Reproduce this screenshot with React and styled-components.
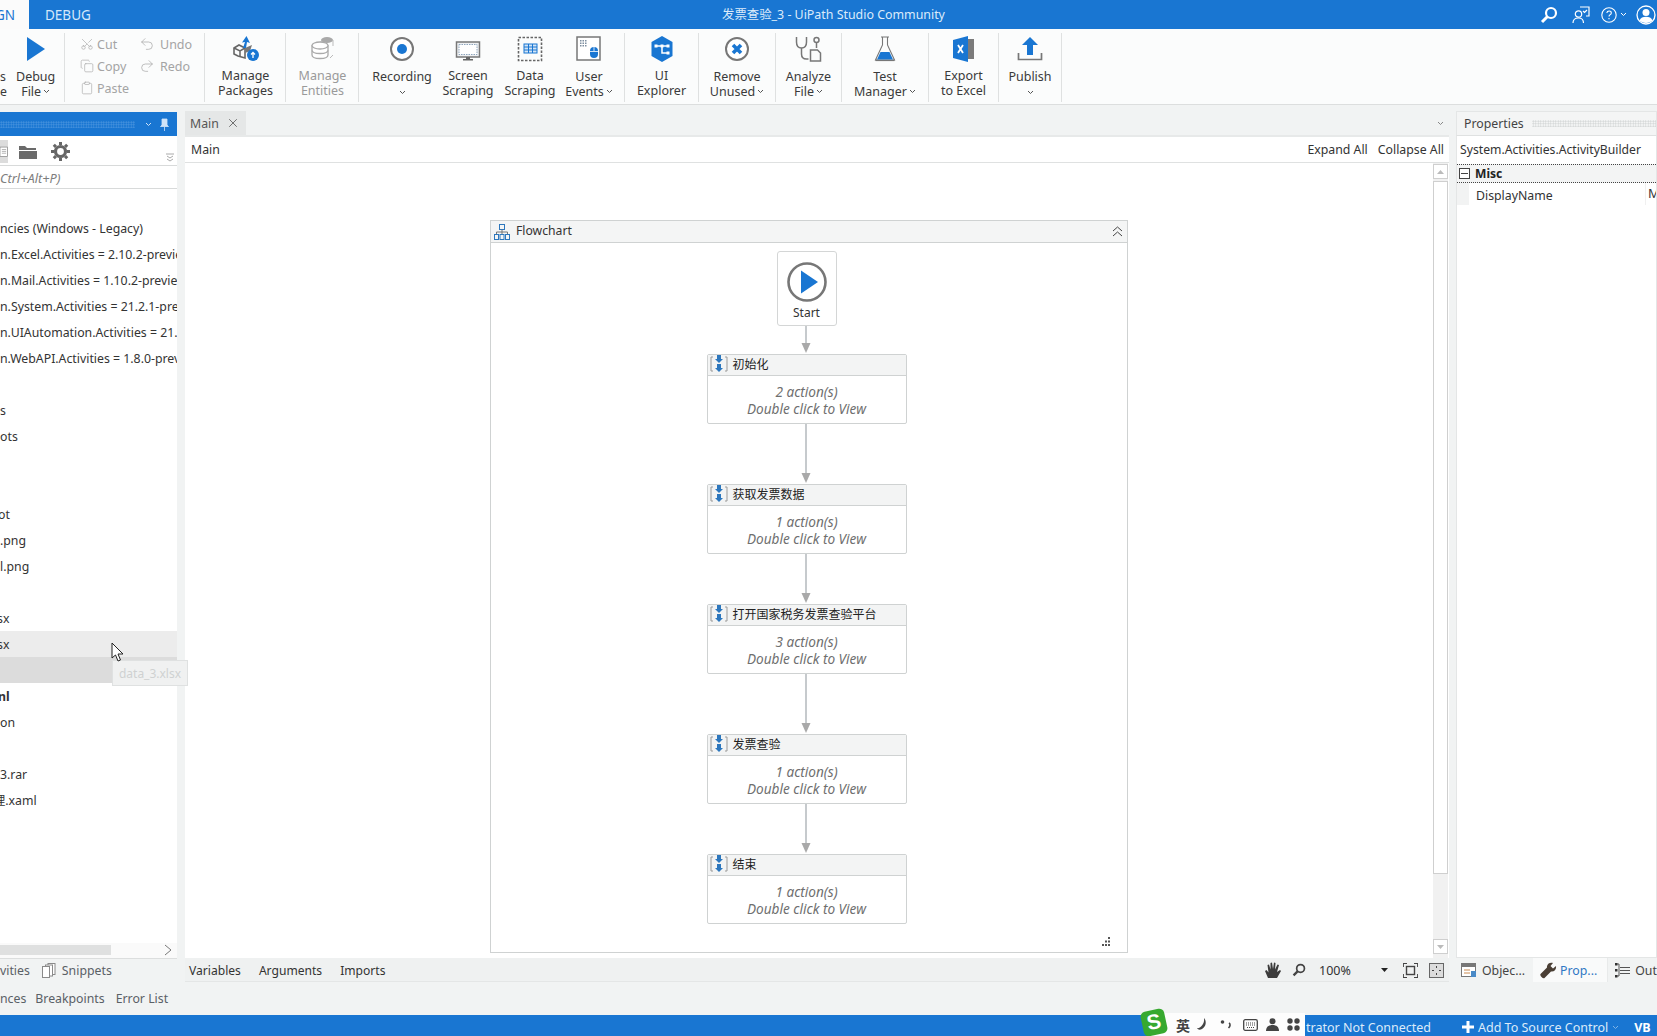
import React from 'react';
import styled, { createGlobalStyle } from 'styled-components';
import { Scissors, Copy, Clipboard, Undo2, Redo2, X } from 'lucide-react';

const BLUE = '#1976d2';
const FONT = '"Noto Sans", "Noto Sans CJK SC", sans-serif';

const Global = createGlobalStyle`
  html, body { margin: 0; padding: 0; background: #f1f3f3; }
  * { box-sizing: border-box; }
`;

const Root = styled.div`
  position: relative; width: 1657px; height: 1036px; display: flex; flex-direction: column;
  overflow: hidden; background: #f1f3f3; font-family: ${FONT}; font-size: 12.3px; color: #333;
`;

/* title bar */
const TitleBar = styled.header`
  height: 29px; flex: none; background: ${BLUE}; display: grid; grid-template-columns: 1fr auto 1fr;
  align-items: center; padding-left: 10px; color: #fff;
`;
const TabsLeft = styled.div`display: flex; height: 29px; margin-left: -10px; align-items: stretch;`;
const ModeTab = styled.div`
  display: flex; align-items: center; overflow: hidden; white-space: nowrap; font-size: 13.5px; flex: none;
  width: ${p => p.$w}px; justify-content: ${p => (p.$active ? 'flex-end' : 'flex-start')};
  background: ${p => (p.$active ? '#fbfbfb' : 'transparent')};
  color: ${p => (p.$active ? BLUE : '#d6e8fa')};
  padding: ${p => (p.$active ? '0 14px 0 0' : '0 0 0 16px')};
`;
const Title = styled.div`font-size: 12.4px; color: #dcebfa; margin-top: -1px;`;
const TitleIcons = styled.div`display: flex; justify-content: flex-end; align-items: center; padding-right: 1px; color: #fff;`;
const TitleIcon = styled.span`display: inline-flex; margin-left: ${p => p.$ml || 0}px;`;

/* ribbon */
const Ribbon = styled.div`
  height: 76px; flex: none; background: #fbfcfc; border-bottom: 1px solid #dcdede; display: flex; padding-top: 4px;
`;
const Group = styled.div`
  width: ${p => p.$w}px; height: 69px; flex: none; display: flex; border-right: 1px solid #dfe1e1;
  padding-left: ${p => p.$pl || 0}px;
`;
const RibbonBtn = styled.div`
  flex: ${p => (p.$w ? `0 0 ${p.$w}px` : '1')}; display: flex; flex-direction: column; align-items: center;
  padding-top: 3px; line-height: 15px; font-size: 12.5px;
  color: ${p => (p.$muted ? '#9a9a9a' : '#3a3a3a')}; white-space: nowrap;
`;
const BtnIcon = styled.div`height: ${p => (p.$tight ? 32 : 33)}px; flex: none; display: flex; justify-content: center; align-items: flex-start;`;
const BtnLine = styled.div`display: flex; align-items: center; gap: 2px;`;
const ChevLine = styled.div`display: flex; margin-top: 6px;`;
const EdgeLabels = styled.div`
  width: 16px; flex: none; padding-top: 36px; line-height: 15px; color: #3a3a3a;
`;
const ClipCol = styled.div`display: flex; flex-direction: column; gap: 4px; padding-top: 2px; margin-left: ${p => p.$ml}px; width: ${p => p.$w}px;`;
const ClipItem = styled.div`display: flex; align-items: center; gap: ${p => p.$gap || 3}px; height: 18px; color: #a4a4a4; font-size: 12.5px;`;
const CutGlyph = styled(Scissors)`transform: rotate(-90deg);`;

/* workspace */
const Workspace = styled.div`flex: 1; display: flex; padding-top: 6px; min-height: 0;`;

const LeftCol = styled.aside`width: 177px; margin-right: 8px; flex: none; display: flex; flex-direction: column; padding-top: 1px;`;
const PanelHead = styled.div`
  height: 24px; flex: none; background: ${BLUE}; display: flex; align-items: center; justify-content: flex-end; gap: 8px; padding-right: 8px;
`;
const HeadDots = styled.div`
  flex: 1; height: 7px; margin-right: 2px;
  background-image: radial-gradient(#4a94de .8px, transparent .9px); background-size: 2.5px 2.5px;
`;
const LeftTools = styled.div`
  height: 30px; flex: none; background: #fff; border-bottom: 1px solid #d8dada; display: flex; align-items: center; position: relative; padding-top: 2px;
`;
const ActiveTool = styled.div`width: 8px; height: 23px; background: #dcdcdc; overflow: hidden; display: flex; justify-content: flex-end; align-items: center; margin-right: 11px;`;
const ToolIcon = styled.span`display: inline-flex; margin-right: ${p => p.$mr || 0}px;`;
const MoreBtn = styled.span`position: absolute; right: 3px; bottom: 3px; display: inline-flex;`;
const SearchRow = styled.div`
  height: 23px; flex: none; background: #fff; border-bottom: 1px solid #d8dada; display: flex; align-items: center; padding-top: 2px;
  font-style: italic; color: #7d7d7d; font-size: 12.8px; white-space: nowrap; overflow: hidden;
`;
const Tree = styled.div`flex: 1; background: #fff; display: flex; flex-direction: column; position: relative; min-height: 0; border-bottom: 1px solid #dcdede;`;
const TreeList = styled.div`flex: 1; padding-top: 26px; overflow: hidden;`;
const TreeRow = styled.div`
  height: 26px; display: flex; align-items: center; white-space: nowrap; overflow: hidden; color: #333; font-size: 12.3px;
  font-weight: ${p => (p.$bold ? 700 : 400)};
  background: ${p => (p.$state === 'hover' ? '#ececec' : p.$state === 'sel' ? '#dcdcdc' : 'transparent')};
`;
const TreeText = styled.span`margin-left: ${p => p.$shift || 0}px; flex: none;`;
const HScroll = styled.div`height: 15px; flex: none; display: flex; align-items: center; background: #fafafa; padding-bottom: 2px;`;
const HThumb = styled.div`width: 111px; height: 10px; background: #dfe0e0;`;
const HArrow = styled.span`margin-left: auto; margin-right: 5px; display: inline-flex;`;
const Tooltip = styled.div`
  position: absolute; left: 112px; top: 471px; width: 76px; height: 26px; border: 1px solid #dfe1e1; background: #f0f1f1;
  color: #cfd1d1; font-size: 12px; display: flex; align-items: center; justify-content: center; z-index: 2;
`;
const Cursor = styled.svg`position: absolute; left: 111px; top: 453px; z-index: 3;`;
const SideTabs = styled.div`
  height: ${p => p.$h}px; flex: none; display: flex; align-items: center; color: #5a6066; white-space: nowrap; font-size: 12.3px;
  padding-bottom: ${p => p.$pb || 0}px;
`;
const SideTab = styled.span`display: inline-flex; align-items: center; gap: 6px; margin-left: ${p => p.$ml || 0}px;`;

/* center */
const Center = styled.main`width: 1264px; flex: none; margin-right: 7px; display: flex; flex-direction: column; padding-bottom: 33px;`;
const TabStrip = styled.div`height: 24px; flex: none; display: flex; align-items: center; justify-content: space-between; padding-right: 5px;`;
const DocTab = styled.div`
  width: 61px; height: 24px; background: #e5e7e7; display: flex; align-items: center; padding-left: 5px; gap: 7px; color: #555;
`;
const Crumb = styled.div`
  height: 28px; flex: none; background: #fff; border-top: 2px solid #e7e9e9; border-bottom: 1px solid #dfe1e1;
  display: flex; align-items: center; padding: 0 5px 0 6px; gap: 10px; color: #333;
`;
const Spacer = styled.div`flex: 1;`;
const Canvas = styled.div`flex: 1; background: #fff; display: flex; min-height: 0;`;
const CanvasArea = styled.div`flex: 1; padding: 57px 0 0 305px; min-width: 0;`;
const VScroll = styled.div`width: 15px; margin-right: 1px; flex: none; display: flex; flex-direction: column; padding: 1px 0 4px; background: #f1f1f1;`;
const VBtn = styled.div`height: 15px; flex: none; background: #fff; border: 1px solid #cfcfcf; display: flex; align-items: center; justify-content: center;`;
const VThumb = styled.div`height: 693px; flex: none; margin-top: 2px; background: #fff; border: 1px solid #cfcfcf;`;
const VTrack = styled.div`flex: 1;`;

const Flowchart = styled.section`width: 638px; height: 733px; border: 1px solid #cfd2d2; position: relative; background: #fff; display: flex; flex-direction: column;`;
const FlowHead = styled.div`height: 22px; flex: none; background: #f4f5f5; border-bottom: 1px solid #cfd2d2; display: flex; align-items: center; padding: 0 4px 0 3px; gap: 6px; color: #333; font-size: 12.2px;`;
const FlowTitle = styled.span`margin-top: -3px;`;
const FlowBody = styled.div`flex: 1; display: flex; flex-direction: column; align-items: center; padding: 8px 5px 0 0;`;
const Grip = styled.svg`position: absolute; right: 16px; bottom: 5px;`;
const StartNode = styled.div`
  width: 60px; height: 75px; border: 1px solid #d4d6d6; border-radius: 3px; background: #fff; display: flex; flex-direction: column;
  align-items: center; padding-top: 10px; font-size: 12px; color: #333; gap: 3px; line-height: 15px;
`;
const Connector = styled.svg`display: block; flex: none; margin-right: 2px;`;
const SeqCard = styled.div`width: 200px; height: 70px; flex: none; border: 1px solid #cfd2d2; border-radius: 2px; background: #fff; display: flex; flex-direction: column;`;
const SeqHead = styled.div`height: 21px; flex: none; background: #f3f4f4; border-bottom: 1px solid #cfd2d2; display: flex; align-items: center; padding: 0 0 3px 2px; gap: 5px; font-size: 12px; color: #222;`;
const SeqBody = styled.div`flex: 1; padding-top: 7px; text-align: center; font-style: italic; color: #6f6f6f; line-height: 17px; font-size: 13.6px;`;

const BottomBar = styled.div`height: 24px; flex: none; background: #eff1f1; border-bottom: 1px solid #e4e6e6; display: flex; align-items: center; padding: 1px 0 0 4px; color: #333; font-size: 12.1px;`;
const BottomTab = styled.span`margin-right: ${p => p.$mr}px;`;
const ZoomCluster = styled.div`margin-left: auto; display: flex; align-items: center; padding-right: 5px;`;
const ZoomValue = styled.span`width: 62px; margin-left: 13px; color: #333; font-size: 12.5px;`;

/* right */
const RightCol = styled.aside`width: 201px; flex: none; display: flex; flex-direction: column; padding-bottom: 33px;`;
const PropHead = styled.div`height: 24px; flex: none; display: flex; align-items: center; padding-left: 7px; gap: 8px; color: #444; border: 1px solid #e4e6e6; border-bottom: 0; background: #f4f5f5;`;
const PropDots = styled.div`
  flex: 1; height: 7px;
  background-image: radial-gradient(#d0d3d3 .8px, transparent .9px); background-size: 2.5px 2.5px;
`;
const PropBody = styled.div`flex: 1; background: #fff; border: 1px solid #e4e6e6; border-top: 1px solid #dfe1e1; overflow: hidden;`;
const PropType = styled.div`height: 27px; display: flex; align-items: center; padding-left: 3px; color: #333; white-space: nowrap; font-size: 12.2px;`;
const MiscRow = styled.div`height: 19px; margin-top: 1px; border-top: 1px dotted #444; border-bottom: 1px dotted #444; background: #f3f4f4; display: flex; align-items: center; padding-left: 2px; gap: 5px; font-weight: 700; color: #222; font-size: 12.1px;`;
const PlusBox = styled.span`width: 11px; height: 11px; border: 1px solid #444; background: #fff; display: flex; align-items: center; justify-content: center;`;
const Minus = styled.span`width: 7px; height: 1px; background: #444;`;
const NameRow = styled.div`height: 22px; display: flex; align-items: center; white-space: nowrap;`;
const NameIndent = styled.span`width: 12px; height: 100%; background: #f2f3f3; flex: none;`;
const NameLabel = styled.span`width: 177px; height: 100%; display: flex; align-items: center; padding: 3px 0 0 7px; color: #333; flex: none; border-right: 1px solid #f0f0f0;`;
const NameValue = styled.span`padding-left: 2px; margin-top: -3px; font-size: 13px;`;
const PropTabs = styled.div`height: 24px; flex: none; display: flex; align-items: center; color: #444; white-space: nowrap; overflow: hidden; padding-left: 5px;`;
const PropTab = styled.div`
  display: flex; align-items: center; gap: ${p => p.$gap || 5}px; height: 24px; padding: 1px ${p => p.$pr || 0}px 0 ${p => p.$pl || 0}px;
  background: ${p => (p.$active ? '#f9fafa' : 'transparent')}; color: ${p => (p.$active ? '#2f78c4' : '#444')};
  border-right: ${p => (p.$active ? '1px solid #e8eaea' : '0')};
`;

/* status */
const Status = styled.footer`
  height: 21px; flex: none; background: ${BLUE}; color: #dcebfa; display: flex; align-items: center; padding: 3px 0 0 1306px; white-space: nowrap; font-size: 12.5px;
`;
const StatusItem = styled.span`display: inline-flex; align-items: center; gap: 4px; margin-left: ${p => p.$ml || 0}px; font-weight: ${p => (p.$bold ? 700 : 400)}; color: ${p => (p.$bold ? '#fff' : '#dcebfa')};`;
const Ime = styled.div`
  position: absolute; left: 1148px; bottom: 0; width: 157px; height: 23px; background: #fdfdfd; display: flex; align-items: center; padding-left: 28px; color: #444; z-index: 4;
`;
const ImeLogo = styled.div`
  position: absolute; left: -6px; top: -3px; width: 24px; height: 25px; background: #37a92f; border-radius: 5px; transform: rotate(-12deg);
  color: #fff; font-weight: 900; font-size: 21px; line-height: 24px; text-align: center; font-family: "Liberation Sans", sans-serif;
`;
const ImeChar = styled.span`font-size: 14px; font-weight: 700; margin-right: 6px;`;
const ImeIcon = styled.span`display: inline-flex; margin-right: ${p => p.$mr}px;`;

/* icons */
const Caret = ({ c = '#555' }) => (
  <svg width="7" height="5" viewBox="0 0 7 5"><path d="M1 1l2.5 2.5L6 1" fill="none" stroke={c} strokeWidth="1" /></svg>
);
const RunIcon = () => <svg width="20" height="26" viewBox="0 0 20 26"><path d="M1 1v24l18-12z" fill={BLUE} /></svg>;
const PackagesIcon = () => (
  <svg width="28" height="26" viewBox="0 0 28 26">
    <path d="M2 12l5-3 6 3v10l-7-2-4-2z" fill="none" stroke="#666" strokeWidth="1.6" />
    <path d="M2 12l6 3 5-3M8 15v6" fill="none" stroke="#666" strokeWidth="1.5" />
    <path d="M13 12l7-3-2 6-5 2z" fill="#777" />
    <path d="M11 12l2-6-3 .5L14.500 0 18 7l-3-1-1 6z" fill={BLUE} />
    <circle cx="21" cy="19" r="6" fill={BLUE} />
    <path d="M21 22v-5M19 18.500l2-2 2 2" stroke="#fff" strokeWidth="1.3" fill="none" />
  </svg>
);
const EntitiesIcon = () => (
  <svg width="26" height="26" viewBox="0 0 26 26">
    <ellipse cx="17" cy="4" rx="6" ry="3" fill="#a9a9a9" />
    <path d="M11 5v4M23 4v6" stroke="#bbb" />
    <g fill="#fff" stroke="#aaa" strokeWidth="1.3">
      <path d="M2 19c0 2 3 3.500 8 3.500s8-1.500 8-3.500v-4H2z" />
      <path d="M2 14c0 2 3 3.500 8 3.500s8-1.500 8-3.500v-4H2z" />
      <ellipse cx="10" cy="9.500" rx="8" ry="3.500" />
    </g>
    <path d="M20 22l3-3" stroke="#bbb" />
  </svg>
);
const RecordIcon = () => (
  <svg width="26" height="26" viewBox="0 0 26 26">
    <circle cx="13" cy="13" r="11" fill="#fff" stroke="#777" strokeWidth="2" />
    <circle cx="13" cy="13" r="5" fill={BLUE} />
  </svg>
);
const ScreenIcon = () => (
  <svg width="26" height="26" viewBox="0 0 26 26">
    <rect x="1.500" y="6" width="23" height="15" fill="#eef0f2" stroke="#777" strokeWidth="1.500" />
    <rect x="4" y="8.500" width="18" height="10" fill="#fff" stroke="#8fa6bd" strokeDasharray="1.500 1" />
    <path d="M11 21h4v2h3v1.500H8V23h3z" fill="#666" />
  </svg>
);
const DataIcon = () => (
  <svg width="26" height="26" viewBox="0 0 26 26">
    <rect x="1.500" y="1.500" width="23" height="23" fill="none" stroke="#666" strokeWidth="1.600" strokeDasharray="2.500 1.500" />
    <rect x="7" y="8" width="13" height="9" fill="#d4e5f6" stroke={BLUE} />
    <path d="M7 11h13M7 14h13M11.500 8v9M15.500 8v9" stroke={BLUE} />
  </svg>
);
const EventsIcon = () => (
  <svg width="26" height="26" viewBox="0 0 26 26">
    <rect x="1" y="1" width="23" height="23" fill="#fff" stroke="#777" strokeWidth="1.500" />
    <g fill="#7d8ea0">
      {[4, 6.500, 9].map(x => [4, 6.500, 9].map(y => <rect key={`${x}-${y}`} x={x} y={y} width="1.500" height="1.500" />))}
    </g>
    <rect x="14" y="11" width="8" height="11" rx="4" fill={BLUE} />
    <path d="M14 15.500h8M18 11v4" stroke="#fff" strokeWidth=".8" />
  </svg>
);
const ExplorerIcon = () => (
  <svg width="24" height="26" viewBox="0 0 24 26">
    <path d="M12 0l10.500 6v14L12 26 1.500 20V6z" fill={BLUE} />
    <path d="M6 10h12M12 10v7h6" stroke="#fff" strokeWidth="1.500" fill="none" />
    <rect x="4.500" y="8.500" width="3" height="3" fill="#fff" /><rect x="16.500" y="8.500" width="3" height="3" fill="#fff" /><rect x="16.500" y="15.500" width="3" height="3" fill="#fff" /><rect x="10.500" y="8.500" width="3" height="3" fill="#fff" />
  </svg>
);
const RemoveIcon = () => (
  <svg width="26" height="26" viewBox="0 0 26 26">
    <circle cx="13" cy="13" r="11" fill="#fff" stroke="#777" strokeWidth="2" />
    <path d="M9 9l8 8M17 9l-8 8" stroke={BLUE} strokeWidth="3.600" />
  </svg>
);
const AnalyzeIcon = () => (
  <svg width="28" height="26" viewBox="0 0 28 26">
    <g fill="none" stroke="#777" strokeWidth="1.500">
      <path d="M1.500 1v5c0 4 2 6 5 6s5-2 5-6V1" />
      <path d="M6.500 12v6c0 3 2 5 5 5h2" />
      <circle cx="21.500" cy="4" r="2.500" />
      <path d="M21.500 6.500V12" />
      <path d="M15.500 14h7l3 3v8h-10z" />
    </g>
  </svg>
);
const FlaskIcon = () => (
  <svg width="22" height="26" viewBox="0 0 22 26">
    <path d="M7 1h8M8.500 1v8L1.500 24h19L13.500 9V1" fill="none" stroke="#777" strokeWidth="1.100" />
    <path d="M6.500 16h9l3.500 7.500H3z" fill={BLUE} />
    <path d="M1.500 24.500h19" stroke="#777" strokeWidth="1.200" />
  </svg>
);
const ExcelIcon = () => (
  <svg width="22" height="26" viewBox="0 0 22 26">
    <rect x="13" y="3" width="8" height="20" fill="#7b7b7b" />
    <path d="M0 4L15 0v26L0 22z" fill={BLUE} />
    <path d="M5 9l5 8M10 9l-5 8" stroke="#fff" strokeWidth="1.800" />
  </svg>
);
const PublishIcon = () => (
  <svg width="26" height="26" viewBox="0 0 26 26">
    <path d="M13 1l8 8h-5v10h-6V9H5z" fill={BLUE} />
    <path d="M1.500 17v6.500h23V17" fill="none" stroke="#777" strokeWidth="1.700" />
  </svg>
);
const MagIcon = ({ c = '#fff', s = 18 }) => (
  <svg width={s} height={s} viewBox="0 0 18 18">
    <circle cx="11" cy="7" r="5" fill="none" stroke={c} strokeWidth="2.200" />
    <path d="M7.500 10.500L2 16" stroke={c} strokeWidth="3" />
  </svg>
);
const FeedbackIcon = () => (
  <svg width="18" height="18" viewBox="0 0 18 18" fill="none" stroke="#fff" strokeWidth="1.200">
    <path d="M8 1h9v9h-3" /><circle cx="6.500" cy="8" r="3.200" /><path d="M1 17c0-4 2.500-5 5.500-5s5 1 5 5" /><path d="M11 5l1.500 1.500L15 4" />
  </svg>
);
const HelpIcon = () => (
  <svg width="16" height="16" viewBox="0 0 16 16" fill="none" stroke="#fff" strokeWidth="1.100">
    <circle cx="8" cy="8" r="7.200" /><path d="M5.800 6c.2-1.300 1.200-2 2.300-2 1.300 0 2.200.8 2.200 1.900 0 1.800-2.300 1.700-2.300 3.600" /><path d="M8 11v1.300" />
  </svg>
);
const UserIcon = () => (
  <svg width="20" height="20" viewBox="0 0 20 20">
    <circle cx="10" cy="10" r="9" fill="none" stroke="#fff" strokeWidth="1.300" />
    <circle cx="10" cy="7.500" r="3.500" fill="#fff" /><path d="M3.500 15.500c1-3 3.500-3.800 6.500-3.800s5.500.8 6.500 3.800c-1.500 1.500-4 2.500-6.500 2.500s-5-1-6.500-2.500z" fill="#fff" />
  </svg>
);
const PinIcon = () => (
  <svg width="9" height="13" viewBox="0 0 9 13"><path d="M2 1h5v6l1.500 1.500h-8L2 7zM4.500 8.500V13" fill="#cfe3f8" stroke="#cfe3f8" strokeWidth=".8" /></svg>
);
const DocIcon = () => (
  <svg width="13" height="18" viewBox="0 0 13 18"><rect x="0" y="1" width="12" height="15" fill="#fff" stroke="#777" /><path d="M3 5h7M3 8h7M3 11h7" stroke="#888" /></svg>
);
const FolderIcon = () => (
  <svg width="18" height="14" viewBox="0 0 18 14"><path d="M0 1h6l2 2h9v2H0z" fill="#6a6a6a" /><path d="M0 6h18v8H0z" fill="#6a6a6a" /></svg>
);
const GearIcon = () => (
  <svg width="19" height="19" viewBox="0 0 19 19">
    <circle cx="9.500" cy="9.500" r="5" fill="none" stroke="#666" strokeWidth="3.200" />
    <g stroke="#666" strokeWidth="3">
      <path d="M9.500 0v3M9.500 16v3M0 9.500h3M16 9.500h3M2.800 2.800l2.100 2.100M14.100 14.100l2.100 2.100M2.800 16.200l2.100-2.100M14.100 4.900l2.100-2.100" />
    </g>
  </svg>
);
const MoreIcon = () => (
  <svg width="8" height="9" viewBox="0 0 8 9" fill="none" stroke="#aaa"><path d="M0 1h8" /><path d="M1 3l3 2 3-2M1 6l3 2 3-2" /></svg>
);
const SnippetIcon = () => (
  <svg width="14" height="15" viewBox="0 0 14 15" fill="#fff" stroke="#8a8a8a">
    <rect x="6" y=".5" width="7" height="11" /><rect x="3.500" y="2" width="7" height="11" /><rect x=".5" y="3.500" width="7" height="11" />
  </svg>
);
const FlowIcon = () => (
  <svg width="16" height="16" viewBox="0 0 16 16" fill="none" stroke="#2d77bd">
    <rect x="5.500" y=".5" width="5" height="5" /><path d="M8 5.500V8M2.500 10V8h11v2M8 8v2" stroke="#777" />
    <rect x=".5" y="10.500" width="4" height="5" /><rect x="6" y="10.500" width="4" height="5" /><rect x="11.500" y="10.500" width="4" height="5" />
  </svg>
);
const CollapseIcon = () => (
  <svg width="11" height="11" viewBox="0 0 11 11" fill="none" stroke="#444"><path d="M1 5l4.500-4L10 5M1 10l4.500-4L10 10" /></svg>
);
const SeqIcon = () => (
  <svg width="18" height="18" viewBox="0 0 18 18">
    <path d="M3 2H1v14h2M15 2h2v14h-2" fill="none" stroke="#9a9a9a" />
    <path d="M7 0h4v4h2l-4 4-4-4h2zM7 9h4v4h2l-4 4-4-4h2z" fill="#2d77bd" />
  </svg>
);
const PlayIcon = () => (
  <svg width="40" height="40" viewBox="0 0 40 40">
    <circle cx="20" cy="20" r="18.500" fill="#fff" stroke="#777" strokeWidth="2.600" />
    <path d="M14 8.500v23L31 20z" fill={BLUE} />
  </svg>
);
const Link = ({ h }) => (
  <Connector width="12" height={h} viewBox={`0 0 12 ${h}`}>
    <path d={`M6 0V${h - 9}`} stroke="#c6cacd" strokeWidth="2" />
    <path d={`M1.500 ${h - 11}h9l-4.500 10z`} fill="#a9a9a9" />
  </Connector>
);
const GripIcon = () => (
  <Grip width="10" height="10" viewBox="0 0 10 10" fill="#555">
    <rect x="7" y="0" width="2" height="2" /><rect x="4" y="3.500" width="2" height="2" /><rect x="7" y="3.500" width="2" height="2" />
    <rect x="1" y="7" width="2" height="2" /><rect x="4" y="7" width="2" height="2" /><rect x="7" y="7" width="2" height="2" />
  </Grip>
);
const HandIcon = () => (
  <svg width="16" height="18" viewBox="0 0 16 18" fill="#3c3c3c">
    <path d="M3 17l-3-7 1.500-1 2 2.500L2.500 4 4 3.500l1.500 5L5.500 2 7 1.500 8 8l1-6.500 1.500.5L10 8.500l2.500-5L14 4l-2 7 3-2 1 1-4 7z" />
  </svg>
);
const FitIcon = () => (
  <svg width="15" height="15" viewBox="0 0 15 15" fill="none" stroke="#444" strokeWidth="1.400">
    <rect x="3.500" y="3.500" width="8" height="8" /><path d="M0 4V0h4M11 0h4v4M15 11v4h-4M4 15H0v-4" strokeWidth="1.800" />
  </svg>
);
const Fit2Icon = () => (
  <svg width="15" height="15" viewBox="0 0 15 15"><rect x=".5" y=".5" width="14" height="14" fill="#dcdcdc" stroke="#666" />
    <path d="M7.500 3v2M7.500 10v2M3 7.500h2M10 7.500h2" stroke="#444" /></svg>
);
const ObjectIcon = () => (
  <svg width="16" height="15" viewBox="0 0 16 15"><rect x=".5" y=".5" width="14" height="13" fill="#fff" stroke="#777" /><rect x="1" y="1" width="13" height="3" fill="#777" />
    <path d="M3 7h6M3 10h6" stroke="#c98a50" /><rect x="10" y="8" width="5" height="6" fill="#4a8ac7" /></svg>
);
const WrenchIcon = () => (
  <svg width="17" height="17" viewBox="0 0 17 17"><path d="M16 4l-3 2.500L10.500 4 13 1c-3-1-6.500 1-6 4.500L.5 12c-1 1.500 2.500 5 4 4l6.500-6.500c3.500.5 5.500-2.500 5-5.500z" fill="#4a3f35" /></svg>
);
const OutlineIcon = () => (
  <svg width="15" height="15" viewBox="0 0 15 15"><g fill="#333"><rect x="0" y="0" width="2.500" height="2.500" /><rect x="0" y="6" width="2.500" height="2.500" /><rect x="0" y="12" width="2.500" height="2.500" /></g>
    <path d="M2 1h2v12h-2M5 4.500h10M5 7.500h10M5 10.500h10" stroke="#555" fill="none" /></svg>
);
const PlusIcon = () => (
  <svg width="12" height="12" viewBox="0 0 12 12"><path d="M4.500 0h3v4.500H12v3H7.500V12h-3V7.500H0v-3h4.500z" fill="#fff" /></svg>
);

const RB = ({ icon, lines, caret, w, muted, chev, tight }) => (
  <RibbonBtn $w={w} $muted={muted}>
    <BtnIcon $tight={tight}>{icon}</BtnIcon>
    {lines.map((l, i) => (
      <BtnLine key={l}>{l}{caret && i === lines.length - 1 && <Caret />}</BtnLine>
    ))}
    {chev && <ChevLine><Caret /></ChevLine>}
  </RibbonBtn>
);

const treeRows = [
  { t: 'ncies (Windows - Legacy)' },
  { t: 'n.Excel.Activities = 2.10.2-preview' },
  { t: 'n.Mail.Activities = 1.10.2-preview' },
  { t: 'n.System.Activities = 21.2.1-preview' },
  { t: 'n.UIAutomation.Activities = 21.2.0' },
  { t: 'n.WebAPI.Activities = 1.8.0-preview' },
  { t: '' }, { t: 's' }, { t: 'ots' }, { t: '' }, { t: '' },
  { t: 'ot', x: -2 }, { t: '.png' }, { t: 'l.png' }, { t: '' }, { t: 'sx', x: -3 },
  { t: 'sx', s: 'hover', x: -3 }, { t: '', s: 'sel' },
  { t: 'nl', b: true, x: -2 }, { t: 'on' }, { t: '' }, { t: '3.rar' }, { t: '理.xaml', x: -7 },
];

const seqs = [
  { title: '初始化', n: 2, gap: 28 },
  { title: '获取发票数据', n: 1, gap: 60 },
  { title: '打开国家税务发票查验平台', n: 3, gap: 50 },
  { title: '发票查验', n: 1, gap: 60 },
  { title: '结束', n: 1, gap: 50 },
];

export default function App() {
  return (
    <Root>
      <Global />
      <TitleBar>
        <TabsLeft>
          <ModeTab $w={29} $active>DESIGN</ModeTab>
          <ModeTab $w={80}>DEBUG</ModeTab>
        </TabsLeft>
        <Title>发票查验_3 - UiPath Studio Community</Title>
        <TitleIcons>
          <TitleIcon><MagIcon /></TitleIcon>
          <TitleIcon $ml={14}><FeedbackIcon /></TitleIcon>
          <TitleIcon $ml={11}><HelpIcon /></TitleIcon>
          <TitleIcon $ml={3}><Caret c="#fff" /></TitleIcon>
          <TitleIcon $ml={9}><UserIcon /></TitleIcon>
        </TitleIcons>
      </TitleBar>

      <Ribbon>
        <Group $w={65}>
          <EdgeLabels><div>s</div><div>e</div></EdgeLabels>
          <RB w={38} icon={<RunIcon />} lines={['Debug', 'File']} caret />
        </Group>
        <Group $w={140}>
          <ClipCol $ml={15} $w={59}>
            <ClipItem><CutGlyph size={14} strokeWidth={1.1} color="#a8a8a8" />Cut</ClipItem>
            <ClipItem><Copy size={14} strokeWidth={1.1} color="#a8a8a8" />Copy</ClipItem>
            <ClipItem><Clipboard size={14} strokeWidth={1.1} color="#a8a8a8" />Paste</ClipItem>
          </ClipCol>
          <ClipCol $ml={0} $w={62}>
            <ClipItem $gap={5}><Undo2 size={16} strokeWidth={1.1} color="#a8a8a8" />Undo</ClipItem>
            <ClipItem $gap={5}><Redo2 size={16} strokeWidth={1.1} color="#a8a8a8" />Redo</ClipItem>
          </ClipCol>
        </Group>
        <Group $w={81} $pl={1}><RB tight icon={<PackagesIcon />} lines={['Manage', 'Packages']} /></Group>
        <Group $w={73} $pl={1}><RB tight muted icon={<EntitiesIcon />} lines={['Manage', 'Entities']} /></Group>
        <Group $w={266} $pl={10}>
          <RB w={66} icon={<RecordIcon />} lines={['Recording']} chev />
          <RB w={66} tight icon={<ScreenIcon />} lines={['Screen', 'Scraping']} />
          <RB w={58} tight icon={<DataIcon />} lines={['Data', 'Scraping']} />
          <RB w={60} icon={<EventsIcon />} lines={['User', 'Events']} caret />
        </Group>
        <Group $w={74}><RB tight icon={<ExplorerIcon />} lines={['UI', 'Explorer']} /></Group>
        <Group $w={77}><RB icon={<RemoveIcon />} lines={['Remove', 'Unused']} caret /></Group>
        <Group $w={66}><RB icon={<AnalyzeIcon />} lines={['Analyze', 'File']} caret /></Group>
        <Group $w={87}><RB icon={<FlaskIcon />} lines={['Test', 'Manager']} caret /></Group>
        <Group $w={70}><RB tight icon={<ExcelIcon />} lines={['Export', 'to Excel']} /></Group>
        <Group $w={63}><RB icon={<PublishIcon />} lines={['Publish']} chev /></Group>
      </Ribbon>

      <Workspace>
        <LeftCol>
          <PanelHead>
            <HeadDots />
            <Caret c="#cfe3f8" />
            <PinIcon />
          </PanelHead>
          <LeftTools>
            <ActiveTool><DocIcon /></ActiveTool>
            <ToolIcon $mr={14}><FolderIcon /></ToolIcon>
            <ToolIcon><GearIcon /></ToolIcon>
            <MoreBtn><MoreIcon /></MoreBtn>
          </LeftTools>
          <SearchRow>Ctrl+Alt+P)</SearchRow>
          <Tree>
            <TreeList>
              {treeRows.map((r, i) => (
                <TreeRow key={i} $state={r.s} $bold={r.b}><TreeText $shift={r.x}>{r.t}</TreeText></TreeRow>
              ))}
            </TreeList>
            <Tooltip>data_3.xlsx</Tooltip>
            <Cursor width="14" height="20" viewBox="0 0 14 20">
              <path d="M1 1v15l3.500-3 2.500 6 2.500-1-2.500-6h5z" fill="#fff" stroke="#222" strokeWidth="1" />
            </Cursor>
            <HScroll>
              <HThumb />
              <HArrow><svg width="8" height="12" viewBox="0 0 8 12"><path d="M1 1l6 5-6 5" fill="none" stroke="#777" /></svg></HArrow>
            </HScroll>
          </Tree>
          <SideTabs $h={26} $pb={4}>
            <SideTab>vities</SideTab>
            <SideTab $ml={12}><SnippetIcon />Snippets</SideTab>
          </SideTabs>
          <SideTabs $h={30} $pb={4}>
            <SideTab>nces</SideTab>
            <SideTab $ml={9}>Breakpoints</SideTab>
            <SideTab $ml={11}>Error List</SideTab>
          </SideTabs>
        </LeftCol>

        <Center>
          <TabStrip>
            <DocTab>Main <X size={14} strokeWidth={1.4} color="#555" /></DocTab>
            <Caret c="#888" />
          </TabStrip>
          <Crumb>
            <span>Main</span>
            <Spacer />
            <span>Expand All</span>
            <span>Collapse All</span>
          </Crumb>
          <Canvas>
            <CanvasArea>
              <Flowchart>
                <FlowHead>
                  <FlowIcon />
                  <FlowTitle>Flowchart</FlowTitle>
                  <Spacer />
                  <CollapseIcon />
                </FlowHead>
                <FlowBody>
                  <StartNode><PlayIcon />Start</StartNode>
                  {seqs.map(s => (
                    <React.Fragment key={s.title}>
                      <Link h={s.gap} />
                      <SeqCard>
                        <SeqHead><SeqIcon />{s.title}</SeqHead>
                        <SeqBody>{s.n} action(s)<br />Double click to View</SeqBody>
                      </SeqCard>
                    </React.Fragment>
                  ))}
                </FlowBody>
                <GripIcon />
              </Flowchart>
            </CanvasArea>
            <VScroll>
              <VBtn><svg width="7" height="4" viewBox="0 0 7 4"><path d="M0 4l3.500-4L7 4z" fill="#bbb" /></svg></VBtn>
              <VThumb />
              <VTrack />
              <VBtn><svg width="7" height="4" viewBox="0 0 7 4"><path d="M0 0l3.500 4L7 0z" fill="#bbb" /></svg></VBtn>
            </VScroll>
          </Canvas>
          <BottomBar>
            <BottomTab $mr={18}>Variables</BottomTab>
            <BottomTab $mr={18}>Arguments</BottomTab>
            <BottomTab $mr={0}>Imports</BottomTab>
            <ZoomCluster>
              <ToolIcon $mr={11}><HandIcon /></ToolIcon>
              <ToolIcon><MagIcon c="#444" s={14} /></ToolIcon>
              <ZoomValue>100%</ZoomValue>
              <ToolIcon $mr={15}><svg width="7" height="4" viewBox="0 0 7 4"><path d="M0 0h7L3.500 4z" fill="#222" /></svg></ToolIcon>
              <ToolIcon $mr={11}><FitIcon /></ToolIcon>
              <ToolIcon><Fit2Icon /></ToolIcon>
            </ZoomCluster>
          </BottomBar>
        </Center>

        <RightCol>
          <PropHead>Properties<PropDots /></PropHead>
          <PropBody>
            <PropType>System.Activities.ActivityBuilder</PropType>
            <MiscRow><PlusBox><Minus /></PlusBox>Misc</MiscRow>
            <NameRow><NameIndent /><NameLabel>DisplayName</NameLabel><NameValue>M</NameValue></NameRow>
          </PropBody>
          <PropTabs>
            <PropTab $pr={8}><ObjectIcon />Objec...</PropTab>
            <PropTab $active $pl={7} $pr={10} $gap={3}><WrenchIcon />Prop...</PropTab>
            <PropTab $pl={7}><OutlineIcon />Out</PropTab>
          </PropTabs>
        </RightCol>
      </Workspace>

      <Status>
        <StatusItem>trator Not Connected</StatusItem>
        <StatusItem $ml={31}><PlusIcon />Add To Source Control <Caret c="#7fb3e6" /></StatusItem>
        <StatusItem $ml={15} $bold>VB</StatusItem>
      </Status>
      <Ime>
        <ImeLogo>S</ImeLogo>
        <ImeChar>英</ImeChar>
        <ImeIcon $mr={11}><svg width="13" height="13" viewBox="0 0 13 13"><path d="M8 0c3 3 2 9-2 11-2 1-4 1-5-1 3 1 8-4 7-10z" fill="#444" /></svg></ImeIcon>
        <ImeIcon $mr={11}><svg width="12" height="12" viewBox="0 0 12 12"><circle cx="2.500" cy="3" r="1.800" fill="#444" /><path d="M9 4c1.500 1 1.500 3-.5 5" stroke="#444" strokeWidth="1.600" fill="none" /></svg></ImeIcon>
        <ImeIcon $mr={8}><svg width="15" height="12" viewBox="0 0 15 12"><rect x=".7" y=".7" width="13.600" height="10.600" rx="1.500" fill="none" stroke="#444" strokeWidth="1.300" /><path d="M3 4h9M3 6h9M4 8.500h7" stroke="#444" strokeDasharray="1 1" /></svg></ImeIcon>
        <ImeIcon $mr={8}><svg width="13" height="14" viewBox="0 0 13 14"><circle cx="6.500" cy="3.200" r="3" fill="#444" /><path d="M0 13c0-4 2.500-6 6.500-6s6.500 2 6.500 6z" fill="#444" /></svg></ImeIcon>
        <ImeIcon $mr={0}><svg width="13" height="13" viewBox="0 0 13 13" fill="#444"><circle cx="3" cy="3" r="2.700" /><circle cx="10" cy="3" r="2.700" /><circle cx="3" cy="10" r="2.700" /><circle cx="10" cy="10" r="2.700" /></svg></ImeIcon>
      </Ime>
    </Root>
  );
}
